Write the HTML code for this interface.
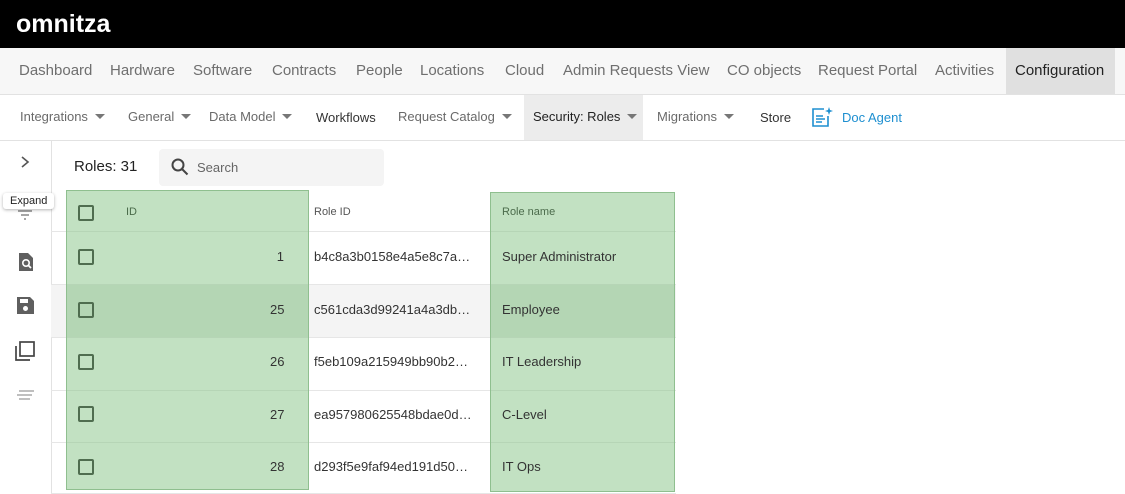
<!DOCTYPE html>
<html><head><meta charset="utf-8"><style>
*{margin:0;padding:0;box-sizing:border-box}
body{width:1125px;height:494px;overflow:hidden;background:#fff;font-family:"Liberation Sans",Arial,sans-serif;position:relative}
.a{position:absolute;white-space:nowrap}
.top{left:0;top:0;width:1125px;height:48px;background:#000}
.logo{left:16px;top:10px;color:#fff;font-size:25px;font-weight:bold;letter-spacing:0px}
.nav{left:0;top:48px;width:1125px;height:47px;background:#f7f7f7;border-bottom:1px solid #e2e2e2}
.n{top:62px;font-size:15px;color:#6f6f6f}
.sub{top:109px;font-size:13px;color:#6a6a6a}
.car{display:inline-block;width:0;height:0;border-left:5px solid transparent;border-right:5px solid transparent;border-top:5px solid #777;margin-left:7px;vertical-align:2px}
.hl{background:#ececec}
.row{left:51px;width:625px;border-bottom:1px solid #e6e6e6;height:53px}
.cb{width:16px;height:16px;border:2px solid #4f6d4f;border-radius:2px}
.t{font-size:13px;color:#333}
.g{background:rgba(134,196,134,0.5);border:1px solid #8fbf8f}
</style></head><body>
<div class="a top"></div>
<div class="a logo">omnitza</div>
<div class="a nav"></div>
<div class="a hl" style="left:1006px;top:48px;width:109px;height:46px;background:#e0e0e0"></div>
<div class="a n" style="left:19px">Dashboard</div>
<div class="a n" style="left:110px">Hardware</div>
<div class="a n" style="left:193px">Software</div>
<div class="a n" style="left:272px">Contracts</div>
<div class="a n" style="left:356px">People</div>
<div class="a n" style="left:420px">Locations</div>
<div class="a n" style="left:505px">Cloud</div>
<div class="a n" style="left:563px">Admin Requests View</div>
<div class="a n" style="left:727px">CO objects</div>
<div class="a n" style="left:818px">Request Portal</div>
<div class="a n" style="left:935px">Activities</div>
<div class="a n" style="left:1015px;color:#222">Configuration</div>
<div class="a" style="left:0;top:140px;width:1125px;height:1px;background:#e2e2e2"></div>
<div class="a hl" style="left:524px;top:95px;width:119px;height:45px"></div>
<div class="a sub" style="left:20px">Integrations<span class="car"></span></div>
<div class="a sub" style="left:128px">General<span class="car"></span></div>
<div class="a sub" style="left:209px">Data Model<span class="car"></span></div>
<div class="a sub" style="left:316px;top:110px;color:#333">Workflows</div>
<div class="a sub" style="left:398px">Request Catalog<span class="car"></span></div>
<div class="a sub" style="left:533px;color:#222">Security: Roles<span class="car"></span></div>
<div class="a sub" style="left:657px">Migrations<span class="car"></span></div>
<div class="a sub" style="left:760px;top:110px;color:#333">Store</div>
<svg class="a" style="left:811px;top:106px" width="24" height="22" viewBox="0 0 24 22" fill="none" stroke="#1e8fd0" stroke-width="1.6"><path d="M13 3H2v17h15V10"/><path d="M5 10h7M5 13h9M5 16h6"/><path d="M18 1l1 3 3 1-3 1-1 3-1-3-3-1 3-1z" fill="#1e8fd0" stroke="none"/></svg>
<div class="a sub" style="left:842px;top:110px;color:#1e8fd0">Doc Agent</div>
<div class="a" style="left:51px;top:141px;width:1px;height:353px;background:#e2e2e2"></div>
<svg class="a" style="left:19px;top:155px" width="12" height="14"><path d="M3 2l6 5-6 5" stroke="#555" stroke-width="1.6" fill="none"/></svg>
<svg class="a" style="left:17px;top:208px" width="16" height="14"><path d="M1 3h14M4 7h8M7 11h2" stroke="#888" stroke-width="1.5"/></svg>
<div class="a" style="left:3px;top:193px;background:#fff;border-radius:3px;box-shadow:0 1px 3px rgba(0,0,0,.3);font-size:11px;color:#222;padding:2px 7px">Expand</div>
<svg class="a" style="left:17px;top:252px" width="18" height="20"><path d="M2 1h9l5 5v13H2z" fill="#5f5f5f"/><circle cx="9" cy="11" r="3.2" fill="none" stroke="#fff" stroke-width="1.6"/><path d="M11 13l3 3" stroke="#fff" stroke-width="1.8"/></svg>
<svg class="a" style="left:16px;top:296px" width="19" height="19"><path d="M1 1h13l4 4v13H1z" fill="#5f5f5f"/><rect x="4" y="3" width="8" height="4" fill="#fff"/><circle cx="9.5" cy="12.5" r="2.5" fill="#fff"/></svg>
<svg class="a" style="left:14px;top:340px" width="22" height="22" fill="none" stroke="#444" stroke-width="1.7"><rect x="6" y="2" width="14" height="14"/><path d="M2 6v14h14"/></svg>
<svg class="a" style="left:16px;top:389px" width="20" height="12"><path d="M3 2h15M1 6h15M3 10h11" stroke="#aaa" stroke-width="1.5"/></svg>
<div class="a" style="left:74px;top:158px;font-size:15px;color:#222">Roles: 31</div>
<div class="a" style="left:159px;top:149px;width:225px;height:37px;background:#f4f4f4;border-radius:4px"></div>
<svg class="a" style="left:171px;top:158px" width="18" height="18" fill="none" stroke="#444" stroke-width="2"><circle cx="7" cy="7" r="5.5"/><path d="M11 11l5.5 5.5"/></svg>
<div class="a" style="left:197px;top:160px;font-size:13px;color:#666">Search</div>
<div class="a" style="left:51px;top:190px;width:625px;height:42px;border-bottom:1px solid #e6e6e6"></div>
<div class="a row" style="top:232px"></div>
<div class="a row" style="top:285px;background:#f4f4f4"></div>
<div class="a row" style="top:338px"></div>
<div class="a row" style="top:390px"></div>
<div class="a row" style="top:442px;height:52px"></div>
<div class="a" style="left:66px;top:285px;width:243px;height:52px;background:rgba(100,160,100,0.12)"></div>
<div class="a" style="left:490px;top:285px;width:185px;height:52px;background:rgba(100,160,100,0.12)"></div>
<div class="a g" style="left:66px;top:190px;width:243px;height:300px"></div>
<div class="a g" style="left:490px;top:192px;width:185px;height:300px"></div>
<div class="a" style="left:126px;top:206px;font-size:11px;color:#4b6b4b">ID</div>
<div class="a" style="left:314px;top:206px;font-size:11px;color:#555">Role ID</div>
<div class="a" style="left:502px;top:206px;font-size:11px;color:#4b6b4b">Role name</div>
<div class="a cb" style="left:78px;top:205px"></div>
<div class="a cb" style="left:78px;top:249px"></div>
<div class="a cb" style="left:78px;top:302px"></div>
<div class="a cb" style="left:78px;top:354px"></div>
<div class="a cb" style="left:78px;top:406px"></div>
<div class="a cb" style="left:78px;top:459px"></div>
<div class="a t" style="left:276px;top:249px;width:8px;text-align:right">1</div>
<div class="a t" style="left:270px;top:302px">25</div>
<div class="a t" style="left:270px;top:354px">26</div>
<div class="a t" style="left:270px;top:407px">27</div>
<div class="a t" style="left:270px;top:459px">28</div>
<div class="a t" style="left:314px;top:249px">b4c8a3b0158e4a5e8c7a…</div>
<div class="a t" style="left:314px;top:302px">c561cda3d99241a4a3db…</div>
<div class="a t" style="left:314px;top:354px">f5eb109a215949bb90b2…</div>
<div class="a t" style="left:314px;top:407px">ea957980625548bdae0d…</div>
<div class="a t" style="left:314px;top:459px">d293f5e9faf94ed191d50…</div>
<div class="a t" style="left:502px;top:249px">Super Administrator</div>
<div class="a t" style="left:502px;top:302px">Employee</div>
<div class="a t" style="left:502px;top:354px">IT Leadership</div>
<div class="a t" style="left:502px;top:407px">C-Level</div>
<div class="a t" style="left:502px;top:459px">IT Ops</div>
</body></html>
